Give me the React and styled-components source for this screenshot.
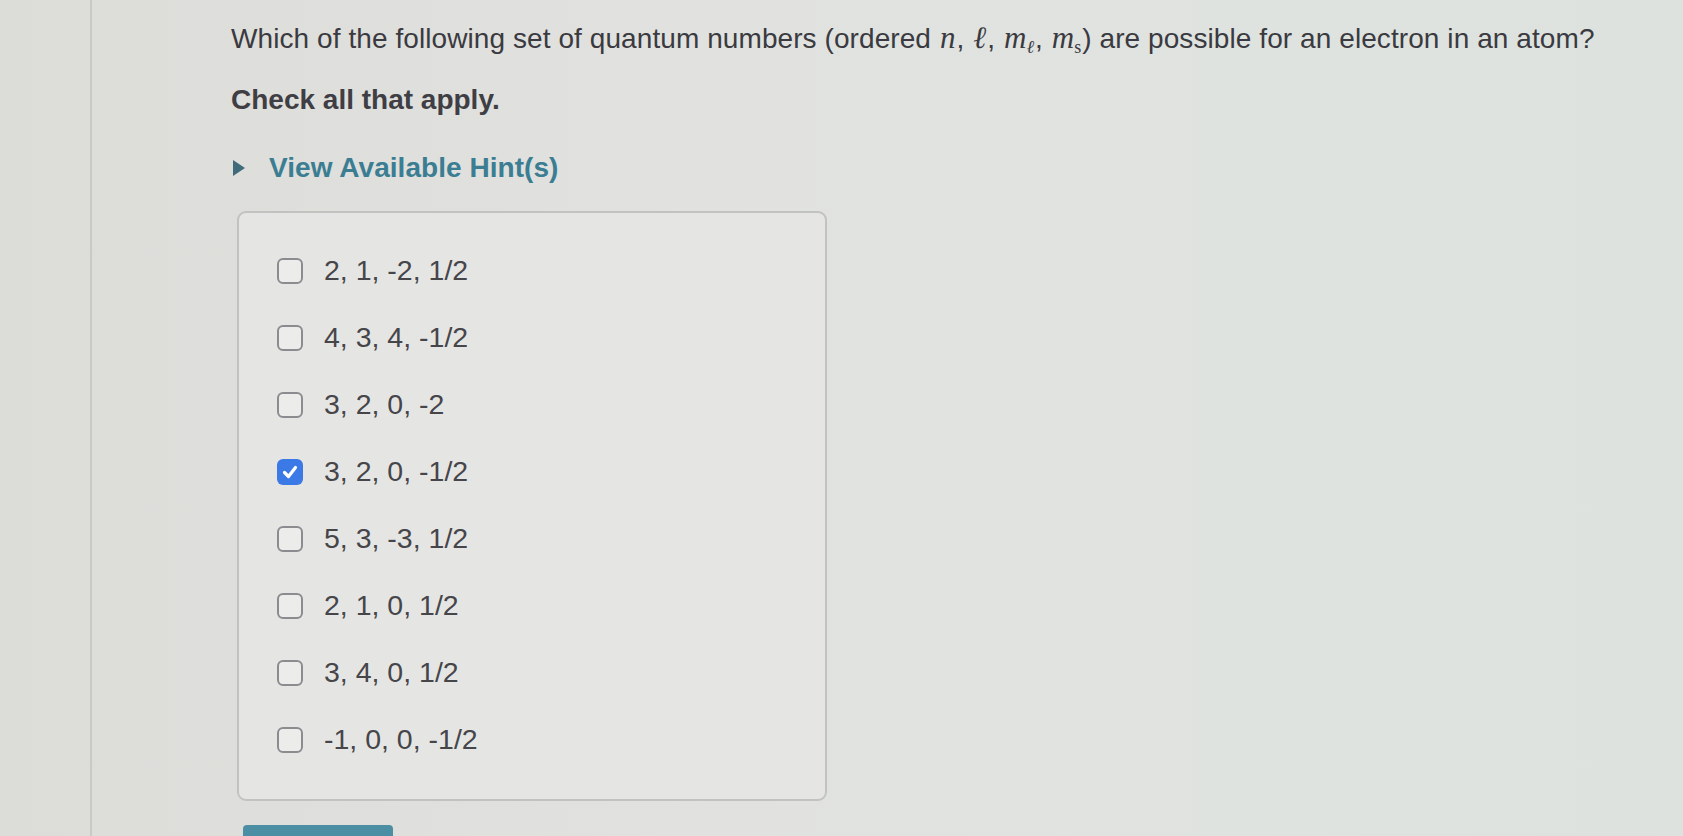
import React from "react";
import styled, { createGlobalStyle } from "styled-components";

const Global = createGlobalStyle`
  html, body { margin: 0; padding: 0; }
  body {
    width: 1683px;
    height: 836px;
    overflow: hidden;
    background: linear-gradient(90deg, #dcdcd9 0%, #e1e2df 40%, #dfe3e0 75%, #dde2df 100%);
    font-family: "Liberation Sans", Arial, Helvetica, sans-serif;
  }
`;

const Page = styled.div`
  display: flex;
  height: 836px;
`;

const Gutter = styled.div`
  width: 90px;
  flex: none;
  border-right: 2px solid #c9cac8;
`;

const Content = styled.main`
  flex: 1;
  padding: 21px 0 0 139px;
  display: flex;
  flex-direction: column;
  align-items: flex-start;
`;

const Question = styled.p`
  margin: 0;
  font-size: 28px;
  line-height: 34px;
  color: #3a3a40;
  white-space: nowrap;
  letter-spacing: 0.08px;
`;

const MathI = styled.i`
  font-family: "Liberation Serif", "Times New Roman", serif;
  font-style: italic;
  font-size: 31px;
  margin: 0 1px;
`;

const Sub = styled.sub`
  font-size: 18px;
  vertical-align: -5px;
  line-height: 0;
  font-style: ${(p) => (p.$upright ? "normal" : "italic")};
`;

const Instruction = styled.p`
  margin: 27px 0 0;
  font-size: 28px;
  line-height: 34px;
  font-weight: 700;
  color: #3e3e44;
`;

const HintToggle = styled.div`
  margin-top: 34px;
  display: flex;
  align-items: center;
  gap: 24px;
  font-size: 28px;
  line-height: 34px;
  font-weight: 700;
  color: #3b7d92;
  letter-spacing: 0.05px;
`;

const Triangle = styled.span`
  width: 0;
  height: 0;
  margin-left: 2px;
  border-top: 8px solid transparent;
  border-bottom: 8px solid transparent;
  border-left: 12px solid #3f6b7b;
`;

const OptionsBox = styled.div`
  margin-top: 26px;
  margin-left: 6px;
  width: 590px;
  box-sizing: border-box;
  padding: 24px 0 26px 38px;
  border: 2px solid #c2c3c1;
  border-radius: 9px;
  background: #e5e6e4;
  display: flex;
  flex-direction: column;
`;

const Row = styled.label`
  height: 67px;
  display: flex;
  align-items: center;
  gap: 21px;
  font-size: 28.5px;
  color: #45454a;
`;

const Box = styled.span`
  width: 26px;
  height: 26px;
  box-sizing: border-box;
  flex: none;
  border-radius: 6px;
  border: ${(p) => (p.$checked ? "none" : "2.5px solid #8b8b90")};
  background: ${(p) => (p.$checked ? "#3b79e6" : "#ececea")};
  display: flex;
  align-items: center;
  justify-content: center;
`;

const Submit = styled.button`
  margin-top: 24px;
  margin-left: 12px;
  width: 150px;
  height: 40px;
  border: none;
  border-radius: 4px 4px 0 0;
  background: #4c8ea4;
`;

const options = [
  ["2, 1, -2, 1/2", false],
  ["4, 3, 4, -1/2", false],
  ["3, 2, 0, -2", false],
  ["3, 2, 0, -1/2", true],
  ["5, 3, -3, 1/2", false],
  ["2, 1, 0, 1/2", false],
  ["3, 4, 0, 1/2", false],
  ["-1, 0, 0, -1/2", false],
];

export default function App() {
  return (
    <>
      <Global />
      <Page>
        <Gutter />
        <Content>
          <Question>
            Which of the following set of quantum numbers (ordered <MathI>n</MathI>,{" "}
            <MathI>ℓ</MathI>, <MathI>m<Sub>ℓ</Sub></MathI>, <MathI>m<Sub $upright>s</Sub></MathI>) are
            possible for an electron in an atom?
          </Question>
          <Instruction>Check all that apply.</Instruction>
          <HintToggle>
            <Triangle />
            View Available Hint(s)
          </HintToggle>
          <OptionsBox>
            {options.map(([text, checked]) => (
              <Row key={text}>
                <Box $checked={checked}>
                  {checked && (
                    <svg width="18" height="18" viewBox="0 0 18 18">
                      <path d="M3.5 9.5 L7.5 13.5 L14.5 4.5" fill="none" stroke="#fff" strokeWidth="3.2" strokeLinecap="round" strokeLinejoin="round" />
                    </svg>
                  )}
                </Box>
                {text}
              </Row>
            ))}
          </OptionsBox>
          <Submit aria-label="Submit" />
        </Content>
      </Page>
    </>
  );
}
